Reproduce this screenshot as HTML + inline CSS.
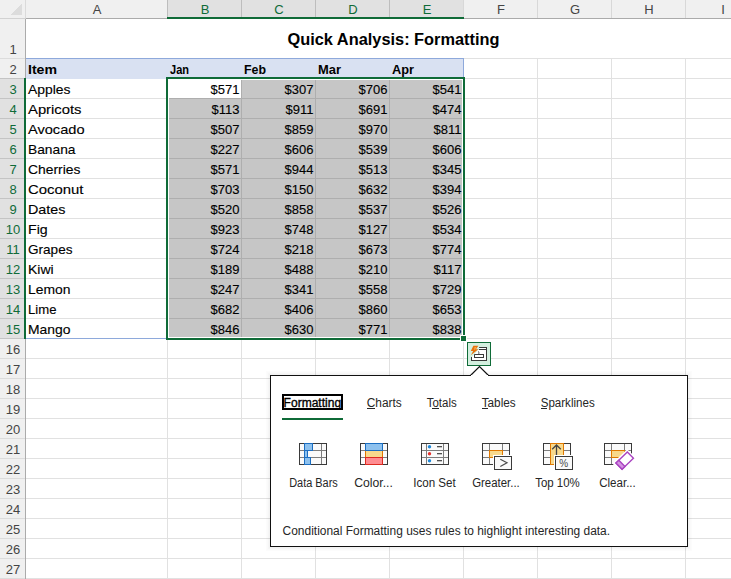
<!DOCTYPE html>
<html><head><meta charset="utf-8"><style>
html,body{margin:0;padding:0;width:731px;height:579px;overflow:hidden;background:#fff}
svg{display:block;font-family:"Liberation Sans",sans-serif}
text.c{stroke:#000;stroke-width:0.12px}
</style></head><body>
<svg width="731" height="579" viewBox="0 0 731 579" shape-rendering="crispEdges">
<rect x="0" y="0" width="731" height="579" fill="#fff"/>
<rect x="26" y="58" width="705" height="1" fill="#e1e1e1"/>
<rect x="26" y="78" width="705" height="1" fill="#e1e1e1"/>
<rect x="26" y="98" width="705" height="1" fill="#e1e1e1"/>
<rect x="26" y="118" width="705" height="1" fill="#e1e1e1"/>
<rect x="26" y="138" width="705" height="1" fill="#e1e1e1"/>
<rect x="26" y="158" width="705" height="1" fill="#e1e1e1"/>
<rect x="26" y="178" width="705" height="1" fill="#e1e1e1"/>
<rect x="26" y="198" width="705" height="1" fill="#e1e1e1"/>
<rect x="26" y="218" width="705" height="1" fill="#e1e1e1"/>
<rect x="26" y="238" width="705" height="1" fill="#e1e1e1"/>
<rect x="26" y="258" width="705" height="1" fill="#e1e1e1"/>
<rect x="26" y="278" width="705" height="1" fill="#e1e1e1"/>
<rect x="26" y="298" width="705" height="1" fill="#e1e1e1"/>
<rect x="26" y="318" width="705" height="1" fill="#e1e1e1"/>
<rect x="26" y="338" width="705" height="1" fill="#e1e1e1"/>
<rect x="26" y="358" width="705" height="1" fill="#e1e1e1"/>
<rect x="26" y="378" width="705" height="1" fill="#e1e1e1"/>
<rect x="26" y="398" width="705" height="1" fill="#e1e1e1"/>
<rect x="26" y="418" width="705" height="1" fill="#e1e1e1"/>
<rect x="26" y="438" width="705" height="1" fill="#e1e1e1"/>
<rect x="26" y="458" width="705" height="1" fill="#e1e1e1"/>
<rect x="26" y="478" width="705" height="1" fill="#e1e1e1"/>
<rect x="26" y="498" width="705" height="1" fill="#e1e1e1"/>
<rect x="26" y="518" width="705" height="1" fill="#e1e1e1"/>
<rect x="26" y="538" width="705" height="1" fill="#e1e1e1"/>
<rect x="26" y="558" width="705" height="1" fill="#e1e1e1"/>
<rect x="26" y="578" width="705" height="1" fill="#e1e1e1"/>
<rect x="167" y="59" width="1" height="520" fill="#e1e1e1"/>
<rect x="241" y="59" width="1" height="520" fill="#e1e1e1"/>
<rect x="315" y="59" width="1" height="520" fill="#e1e1e1"/>
<rect x="389" y="59" width="1" height="520" fill="#e1e1e1"/>
<rect x="463" y="59" width="1" height="520" fill="#e1e1e1"/>
<rect x="537" y="59" width="1" height="520" fill="#e1e1e1"/>
<rect x="611" y="59" width="1" height="520" fill="#e1e1e1"/>
<rect x="685" y="59" width="1" height="520" fill="#e1e1e1"/>
<rect x="26" y="58" width="438" height="21" fill="#d9e1f2"/>
<rect x="26" y="58" width="438" height="1" fill="#8ea9db"/>
<rect x="463" y="58" width="1" height="21" fill="#8ea9db"/>
<rect x="26" y="338" width="140" height="1" fill="#8ea9db"/>
<rect x="168" y="79" width="295" height="259" fill="#c6c6c6"/>
<rect x="241" y="79" width="1" height="259" fill="#aeaeae"/>
<rect x="315" y="79" width="1" height="259" fill="#aeaeae"/>
<rect x="389" y="79" width="1" height="259" fill="#aeaeae"/>
<rect x="168" y="98" width="295" height="1" fill="#aeaeae"/>
<rect x="168" y="118" width="295" height="1" fill="#aeaeae"/>
<rect x="168" y="138" width="295" height="1" fill="#aeaeae"/>
<rect x="168" y="158" width="295" height="1" fill="#aeaeae"/>
<rect x="168" y="178" width="295" height="1" fill="#aeaeae"/>
<rect x="168" y="198" width="295" height="1" fill="#aeaeae"/>
<rect x="168" y="218" width="295" height="1" fill="#aeaeae"/>
<rect x="168" y="238" width="295" height="1" fill="#aeaeae"/>
<rect x="168" y="258" width="295" height="1" fill="#aeaeae"/>
<rect x="168" y="278" width="295" height="1" fill="#aeaeae"/>
<rect x="168" y="298" width="295" height="1" fill="#aeaeae"/>
<rect x="168" y="318" width="295" height="1" fill="#aeaeae"/>
<rect x="168" y="79" width="73" height="19" fill="#fff"/>
<rect x="168" y="79" width="295" height="1" fill="#fff"/>
<rect x="168" y="337" width="295" height="1" fill="#fff"/>
<rect x="168" y="79" width="1" height="259" fill="#fff"/>
<rect x="462" y="79" width="1" height="259" fill="#fff"/>
<rect x="166" y="77" width="299" height="2" fill="#0f6b38"/>
<rect x="166" y="338" width="299" height="2" fill="#0f6b38"/>
<rect x="166" y="77" width="2" height="263" fill="#0f6b38"/>
<rect x="463" y="77" width="2" height="263" fill="#0f6b38"/>
<rect x="460" y="335" width="7" height="7" fill="#fff"/>
<rect x="461" y="336" width="5" height="5" fill="#0f6b38"/>
<rect x="0" y="0" width="731" height="18" fill="#f0f0f0"/>
<rect x="167" y="0" width="297" height="18" fill="#e1e1e1"/>
<rect x="26" y="18" width="705" height="1" fill="#ababab"/>
<rect x="0" y="18" width="26" height="1" fill="#d2d2d2"/>
<rect x="25" y="0" width="1" height="18" fill="#dadada"/>
<rect x="167" y="17" width="297" height="2" fill="#0f6b38"/>
<rect x="167" y="0" width="1" height="17" fill="#bdbdbd"/>
<rect x="241" y="0" width="1" height="17" fill="#bdbdbd"/>
<rect x="315" y="0" width="1" height="17" fill="#bdbdbd"/>
<rect x="389" y="0" width="1" height="17" fill="#bdbdbd"/>
<rect x="463" y="0" width="1" height="17" fill="#d8d8d8"/>
<rect x="537" y="0" width="1" height="18" fill="#d8d8d8"/>
<rect x="611" y="0" width="1" height="18" fill="#d8d8d8"/>
<rect x="685" y="0" width="1" height="18" fill="#d8d8d8"/>
<polygon points="11,14.5 22,14.5 22,3.7" fill="#dcdcdc"/>
<rect x="0" y="19" width="25" height="560" fill="#f0f0f0"/>
<rect x="0" y="79" width="24" height="259" fill="#e1e1e1"/>
<rect x="25" y="19" width="1" height="560" fill="#ababab"/>
<rect x="24" y="78" width="2" height="261" fill="#0f6b38"/>
<rect x="0" y="58" width="25" height="1" fill="#dcdcdc"/>
<rect x="0" y="78" width="24" height="1" fill="#c4c4c4"/>
<rect x="0" y="98" width="24" height="1" fill="#c4c4c4"/>
<rect x="0" y="118" width="24" height="1" fill="#c4c4c4"/>
<rect x="0" y="138" width="24" height="1" fill="#c4c4c4"/>
<rect x="0" y="158" width="24" height="1" fill="#c4c4c4"/>
<rect x="0" y="178" width="24" height="1" fill="#c4c4c4"/>
<rect x="0" y="198" width="24" height="1" fill="#c4c4c4"/>
<rect x="0" y="218" width="24" height="1" fill="#c4c4c4"/>
<rect x="0" y="238" width="24" height="1" fill="#c4c4c4"/>
<rect x="0" y="258" width="24" height="1" fill="#c4c4c4"/>
<rect x="0" y="278" width="24" height="1" fill="#c4c4c4"/>
<rect x="0" y="298" width="24" height="1" fill="#c4c4c4"/>
<rect x="0" y="318" width="24" height="1" fill="#c4c4c4"/>
<rect x="0" y="338" width="24" height="1" fill="#c4c4c4"/>
<rect x="0" y="358" width="25" height="1" fill="#dcdcdc"/>
<rect x="0" y="378" width="25" height="1" fill="#dcdcdc"/>
<rect x="0" y="398" width="25" height="1" fill="#dcdcdc"/>
<rect x="0" y="418" width="25" height="1" fill="#dcdcdc"/>
<rect x="0" y="438" width="25" height="1" fill="#dcdcdc"/>
<rect x="0" y="458" width="25" height="1" fill="#dcdcdc"/>
<rect x="0" y="478" width="25" height="1" fill="#dcdcdc"/>
<rect x="0" y="498" width="25" height="1" fill="#dcdcdc"/>
<rect x="0" y="518" width="25" height="1" fill="#dcdcdc"/>
<rect x="0" y="538" width="25" height="1" fill="#dcdcdc"/>
<rect x="0" y="558" width="25" height="1" fill="#dcdcdc"/>
<rect x="0" y="578" width="25" height="1" fill="#dcdcdc"/>
<text x="97" y="14" font-size="13" fill="#444" text-anchor="middle">A</text>
<text x="205" y="14" font-size="13" fill="#0f6b38" text-anchor="middle">B</text>
<text x="279" y="14" font-size="13" fill="#0f6b38" text-anchor="middle">C</text>
<text x="353" y="14" font-size="13" fill="#0f6b38" text-anchor="middle">D</text>
<text x="427" y="14" font-size="13" fill="#0f6b38" text-anchor="middle">E</text>
<text x="501" y="14" font-size="13" fill="#444" text-anchor="middle">F</text>
<text x="575" y="14" font-size="13" fill="#444" text-anchor="middle">G</text>
<text x="649" y="14" font-size="13" fill="#444" text-anchor="middle">H</text>
<text x="723" y="14" font-size="13" fill="#444" text-anchor="middle">I</text>
<text x="13" y="54" font-size="13" fill="#444" text-anchor="middle">1</text>
<text x="13" y="74" font-size="13" fill="#444" text-anchor="middle">2</text>
<text x="13" y="94" font-size="13" fill="#0f6b38" text-anchor="middle">3</text>
<text x="13" y="114" font-size="13" fill="#0f6b38" text-anchor="middle">4</text>
<text x="13" y="134" font-size="13" fill="#0f6b38" text-anchor="middle">5</text>
<text x="13" y="154" font-size="13" fill="#0f6b38" text-anchor="middle">6</text>
<text x="13" y="174" font-size="13" fill="#0f6b38" text-anchor="middle">7</text>
<text x="13" y="194" font-size="13" fill="#0f6b38" text-anchor="middle">8</text>
<text x="13" y="214" font-size="13" fill="#0f6b38" text-anchor="middle">9</text>
<text x="13" y="234" font-size="13" fill="#0f6b38" text-anchor="middle">10</text>
<text x="13" y="254" font-size="13" fill="#0f6b38" text-anchor="middle">11</text>
<text x="13" y="274" font-size="13" fill="#0f6b38" text-anchor="middle">12</text>
<text x="13" y="294" font-size="13" fill="#0f6b38" text-anchor="middle">13</text>
<text x="13" y="314" font-size="13" fill="#0f6b38" text-anchor="middle">14</text>
<text x="13" y="334" font-size="13" fill="#0f6b38" text-anchor="middle">15</text>
<text x="13" y="354" font-size="13" fill="#444" text-anchor="middle">16</text>
<text x="13" y="374" font-size="13" fill="#444" text-anchor="middle">17</text>
<text x="13" y="394" font-size="13" fill="#444" text-anchor="middle">18</text>
<text x="13" y="414" font-size="13" fill="#444" text-anchor="middle">19</text>
<text x="13" y="434" font-size="13" fill="#444" text-anchor="middle">20</text>
<text x="13" y="454" font-size="13" fill="#444" text-anchor="middle">21</text>
<text x="13" y="474" font-size="13" fill="#444" text-anchor="middle">22</text>
<text x="13" y="494" font-size="13" fill="#444" text-anchor="middle">23</text>
<text x="13" y="514" font-size="13" fill="#444" text-anchor="middle">24</text>
<text x="13" y="534" font-size="13" fill="#444" text-anchor="middle">25</text>
<text x="13" y="554" font-size="13" fill="#444" text-anchor="middle">26</text>
<text x="13" y="574" font-size="13" fill="#444" text-anchor="middle">27</text>
<text x="287.5" y="44.5" font-size="16" fill="#000" font-weight="bold" textLength="212" lengthAdjust="spacingAndGlyphs">Quick Analysis: Formatting</text>
<text x="28" y="74" font-size="13" fill="#000" font-weight="bold" textLength="29" lengthAdjust="spacingAndGlyphs">Item</text>
<text x="170" y="74" font-size="13" fill="#000" font-weight="bold" textLength="19" lengthAdjust="spacingAndGlyphs">Jan</text>
<text x="244" y="74" font-size="13" fill="#000" font-weight="bold" textLength="22" lengthAdjust="spacingAndGlyphs">Feb</text>
<text x="318" y="74" font-size="13" fill="#000" font-weight="bold" textLength="23" lengthAdjust="spacingAndGlyphs">Mar</text>
<text x="392" y="74" font-size="13" fill="#000" font-weight="bold" textLength="22" lengthAdjust="spacingAndGlyphs">Apr</text>
<text x="28" y="94" font-size="13" fill="#000" textLength="42.5" lengthAdjust="spacingAndGlyphs" class="c">Apples</text>
<text x="239.5" y="94" font-size="13" fill="#000" text-anchor="end" class="c">$571</text>
<text x="313.5" y="94" font-size="13" fill="#000" text-anchor="end" class="c">$307</text>
<text x="387.5" y="94" font-size="13" fill="#000" text-anchor="end" class="c">$706</text>
<text x="461.5" y="94" font-size="13" fill="#000" text-anchor="end" class="c">$541</text>
<text x="28" y="114" font-size="13" fill="#000" textLength="53.5" lengthAdjust="spacingAndGlyphs" class="c">Apricots</text>
<text x="239.5" y="114" font-size="13" fill="#000" text-anchor="end" class="c">$113</text>
<text x="313.5" y="114" font-size="13" fill="#000" text-anchor="end" class="c">$911</text>
<text x="387.5" y="114" font-size="13" fill="#000" text-anchor="end" class="c">$691</text>
<text x="461.5" y="114" font-size="13" fill="#000" text-anchor="end" class="c">$474</text>
<text x="28" y="134" font-size="13" fill="#000" textLength="56.5" lengthAdjust="spacingAndGlyphs" class="c">Avocado</text>
<text x="239.5" y="134" font-size="13" fill="#000" text-anchor="end" class="c">$507</text>
<text x="313.5" y="134" font-size="13" fill="#000" text-anchor="end" class="c">$859</text>
<text x="387.5" y="134" font-size="13" fill="#000" text-anchor="end" class="c">$970</text>
<text x="461.5" y="134" font-size="13" fill="#000" text-anchor="end" class="c">$811</text>
<text x="28" y="154" font-size="13" fill="#000" textLength="47.5" lengthAdjust="spacingAndGlyphs" class="c">Banana</text>
<text x="239.5" y="154" font-size="13" fill="#000" text-anchor="end" class="c">$227</text>
<text x="313.5" y="154" font-size="13" fill="#000" text-anchor="end" class="c">$606</text>
<text x="387.5" y="154" font-size="13" fill="#000" text-anchor="end" class="c">$539</text>
<text x="461.5" y="154" font-size="13" fill="#000" text-anchor="end" class="c">$606</text>
<text x="28" y="174" font-size="13" fill="#000" textLength="52.5" lengthAdjust="spacingAndGlyphs" class="c">Cherries</text>
<text x="239.5" y="174" font-size="13" fill="#000" text-anchor="end" class="c">$571</text>
<text x="313.5" y="174" font-size="13" fill="#000" text-anchor="end" class="c">$944</text>
<text x="387.5" y="174" font-size="13" fill="#000" text-anchor="end" class="c">$513</text>
<text x="461.5" y="174" font-size="13" fill="#000" text-anchor="end" class="c">$345</text>
<text x="28" y="194" font-size="13" fill="#000" textLength="55.5" lengthAdjust="spacingAndGlyphs" class="c">Coconut</text>
<text x="239.5" y="194" font-size="13" fill="#000" text-anchor="end" class="c">$703</text>
<text x="313.5" y="194" font-size="13" fill="#000" text-anchor="end" class="c">$150</text>
<text x="387.5" y="194" font-size="13" fill="#000" text-anchor="end" class="c">$632</text>
<text x="461.5" y="194" font-size="13" fill="#000" text-anchor="end" class="c">$394</text>
<text x="28" y="214" font-size="13" fill="#000" textLength="37.5" lengthAdjust="spacingAndGlyphs" class="c">Dates</text>
<text x="239.5" y="214" font-size="13" fill="#000" text-anchor="end" class="c">$520</text>
<text x="313.5" y="214" font-size="13" fill="#000" text-anchor="end" class="c">$858</text>
<text x="387.5" y="214" font-size="13" fill="#000" text-anchor="end" class="c">$537</text>
<text x="461.5" y="214" font-size="13" fill="#000" text-anchor="end" class="c">$526</text>
<text x="28" y="234" font-size="13" fill="#000" textLength="19.7" lengthAdjust="spacingAndGlyphs" class="c">Fig</text>
<text x="239.5" y="234" font-size="13" fill="#000" text-anchor="end" class="c">$923</text>
<text x="313.5" y="234" font-size="13" fill="#000" text-anchor="end" class="c">$748</text>
<text x="387.5" y="234" font-size="13" fill="#000" text-anchor="end" class="c">$127</text>
<text x="461.5" y="234" font-size="13" fill="#000" text-anchor="end" class="c">$534</text>
<text x="28" y="254" font-size="13" fill="#000" textLength="44.5" lengthAdjust="spacingAndGlyphs" class="c">Grapes</text>
<text x="239.5" y="254" font-size="13" fill="#000" text-anchor="end" class="c">$724</text>
<text x="313.5" y="254" font-size="13" fill="#000" text-anchor="end" class="c">$218</text>
<text x="387.5" y="254" font-size="13" fill="#000" text-anchor="end" class="c">$673</text>
<text x="461.5" y="254" font-size="13" fill="#000" text-anchor="end" class="c">$774</text>
<text x="28" y="274" font-size="13" fill="#000" textLength="25.7" lengthAdjust="spacingAndGlyphs" class="c">Kiwi</text>
<text x="239.5" y="274" font-size="13" fill="#000" text-anchor="end" class="c">$189</text>
<text x="313.5" y="274" font-size="13" fill="#000" text-anchor="end" class="c">$488</text>
<text x="387.5" y="274" font-size="13" fill="#000" text-anchor="end" class="c">$210</text>
<text x="461.5" y="274" font-size="13" fill="#000" text-anchor="end" class="c">$117</text>
<text x="28" y="294" font-size="13" fill="#000" textLength="42.5" lengthAdjust="spacingAndGlyphs" class="c">Lemon</text>
<text x="239.5" y="294" font-size="13" fill="#000" text-anchor="end" class="c">$247</text>
<text x="313.5" y="294" font-size="13" fill="#000" text-anchor="end" class="c">$341</text>
<text x="387.5" y="294" font-size="13" fill="#000" text-anchor="end" class="c">$558</text>
<text x="461.5" y="294" font-size="13" fill="#000" text-anchor="end" class="c">$729</text>
<text x="28" y="314" font-size="13" fill="#000" textLength="28.5" lengthAdjust="spacingAndGlyphs" class="c">Lime</text>
<text x="239.5" y="314" font-size="13" fill="#000" text-anchor="end" class="c">$682</text>
<text x="313.5" y="314" font-size="13" fill="#000" text-anchor="end" class="c">$406</text>
<text x="387.5" y="314" font-size="13" fill="#000" text-anchor="end" class="c">$860</text>
<text x="461.5" y="314" font-size="13" fill="#000" text-anchor="end" class="c">$653</text>
<text x="28" y="334" font-size="13" fill="#000" textLength="42.5" lengthAdjust="spacingAndGlyphs" class="c">Mango</text>
<text x="239.5" y="334" font-size="13" fill="#000" text-anchor="end" class="c">$846</text>
<text x="313.5" y="334" font-size="13" fill="#000" text-anchor="end" class="c">$630</text>
<text x="387.5" y="334" font-size="13" fill="#000" text-anchor="end" class="c">$771</text>
<text x="461.5" y="334" font-size="13" fill="#000" text-anchor="end" class="c">$838</text>
<rect x="269" y="374" width="419" height="173" fill="none" stroke="rgba(0,0,0,0.05)" stroke-width="1" transform="translate(0.5,0.5)" shape-rendering="crispEdges"/>
<rect x="268" y="373" width="421" height="175" fill="none" stroke="rgba(0,0,0,0.035)" stroke-width="1" transform="translate(0.5,0.5)" shape-rendering="crispEdges"/>
<rect x="267" y="372" width="423" height="177" fill="none" stroke="rgba(0,0,0,0.02)" stroke-width="1" transform="translate(0.5,0.5)" shape-rendering="crispEdges"/>
<rect x="266" y="371" width="425" height="179" fill="none" stroke="rgba(0,0,0,0.01)" stroke-width="1" transform="translate(0.5,0.5)" shape-rendering="crispEdges"/>
<rect x="270" y="375" width="418" height="172" fill="#111"/>
<rect x="271" y="376" width="416" height="170" fill="#fff"/>
<polygon points="470.5,375.5 479.5,366.5 488.5,375.5" fill="#fff" stroke="#111" stroke-width="1.2" shape-rendering="geometricPrecision"/>
<rect x="471" y="375" width="17" height="2" fill="#fff"/>
<rect x="282" y="394" width="61" height="16" fill="#000"/>
<rect x="284" y="396" width="57" height="12" fill="#fff"/>
<svg x="284" y="396" width="57" height="12" overflow="hidden">
<text x="-0.4" y="10.5" font-size="12" fill="#000" textLength="57.5" lengthAdjust="spacingAndGlyphs" stroke="#000" stroke-width="0.35">Formatting</text>
</svg>
<rect x="282" y="418" width="61" height="2" fill="#0f6b38"/>
<text x="366.7" y="406.6" font-size="12" fill="#262626" textLength="35" lengthAdjust="spacingAndGlyphs">Charts</text>
<rect x="367" y="408" width="8" height="1" fill="#262626"/>
<text x="426.7" y="406.6" font-size="12" fill="#262626" textLength="30" lengthAdjust="spacingAndGlyphs">Totals</text>
<rect x="432" y="408" width="7" height="1" fill="#262626"/>
<text x="481.7" y="406.6" font-size="12" fill="#262626" textLength="34" lengthAdjust="spacingAndGlyphs">Tables</text>
<rect x="482" y="408" width="6" height="1" fill="#262626"/>
<text x="540.7" y="406.6" font-size="12" fill="#262626" textLength="54" lengthAdjust="spacingAndGlyphs">Sparklines</text>
<rect x="541" y="408" width="6" height="1" fill="#262626"/>
<rect x="299" y="443" width="28" height="22" fill="#3a3a3a"/>
<rect x="300" y="444" width="26" height="20" fill="#fafafa"/>
<rect x="300" y="450" width="26" height="1" fill="#7d7d7d"/>
<rect x="300" y="457" width="26" height="1" fill="#7d7d7d"/>
<rect x="304" y="444" width="1" height="20" fill="#7d7d7d"/>
<rect x="321" y="444" width="1" height="20" fill="#7d7d7d"/>
<rect x="304" y="443" width="9" height="8" fill="#1b6ec2"/>
<rect x="305" y="444" width="7" height="6" fill="#8dc1ee"/>
<rect x="304" y="450" width="4" height="8" fill="#1b6ec2"/>
<rect x="305" y="451" width="2" height="6" fill="#8dc1ee"/>
<rect x="304" y="457" width="7" height="8" fill="#1b6ec2"/>
<rect x="305" y="458" width="5" height="6" fill="#8dc1ee"/>
<rect x="360" y="443" width="28" height="22" fill="#3a3a3a"/>
<rect x="361" y="444" width="26" height="20" fill="#fafafa"/>
<rect x="361" y="450" width="26" height="1" fill="#7d7d7d"/>
<rect x="361" y="457" width="26" height="1" fill="#7d7d7d"/>
<rect x="365" y="444" width="1" height="20" fill="#7d7d7d"/>
<rect x="382" y="444" width="1" height="20" fill="#7d7d7d"/>
<rect x="365" y="450" width="18" height="8" fill="#e07800"/>
<rect x="366" y="451" width="16" height="6" fill="#f8d98c"/>
<rect x="365" y="443" width="18" height="8" fill="#1b6ec2"/>
<rect x="366" y="444" width="16" height="6" fill="#8dc1ee"/>
<rect x="365" y="457" width="18" height="8" fill="#dc2a20"/>
<rect x="366" y="458" width="16" height="6" fill="#ff8c91"/>
<rect x="366" y="451" width="16" height="6" fill="#f8d98c"/>
<rect x="421" y="443" width="28" height="22" fill="#3a3a3a"/>
<rect x="422" y="444" width="26" height="20" fill="#fafafa"/>
<rect x="422" y="450" width="26" height="1" fill="#7d7d7d"/>
<rect x="422" y="457" width="26" height="1" fill="#7d7d7d"/>
<rect x="426" y="444" width="1" height="20" fill="#7d7d7d"/>
<rect x="443" y="444" width="1" height="20" fill="#7d7d7d"/>
<circle cx="429.5" cy="446.8" r="1.7" fill="#1e88d8" shape-rendering="geometricPrecision"/>
<rect x="437" y="446" width="5" height="1" fill="#505050"/>
<rect x="437" y="447" width="5" height="1" fill="#c4c4c4"/>
<circle cx="429.5" cy="453.8" r="1.7" fill="#e5322d" shape-rendering="geometricPrecision"/>
<rect x="437" y="453" width="5" height="1" fill="#505050"/>
<rect x="437" y="454" width="5" height="1" fill="#c4c4c4"/>
<circle cx="429.5" cy="460.8" r="1.7" fill="#1e88d8" shape-rendering="geometricPrecision"/>
<rect x="437" y="460" width="5" height="1" fill="#505050"/>
<rect x="437" y="461" width="5" height="1" fill="#c4c4c4"/>
<rect x="482" y="443" width="28" height="22" fill="#3a3a3a"/>
<rect x="483" y="444" width="26" height="20" fill="#fafafa"/>
<rect x="483" y="450" width="26" height="1" fill="#7d7d7d"/>
<rect x="483" y="457" width="26" height="1" fill="#7d7d7d"/>
<rect x="489" y="444" width="1" height="20" fill="#7d7d7d"/>
<rect x="502" y="444" width="1" height="20" fill="#7d7d7d"/>
<rect x="489" y="450" width="14" height="8" fill="#e07800"/>
<rect x="490" y="451" width="12" height="6" fill="#f8d98c"/>
<rect x="493" y="455" width="21" height="17" fill="#fff"/>
<rect x="494" y="456" width="18" height="14" fill="#3a3a3a"/>
<rect x="495" y="457" width="16" height="12" fill="#fafafa"/>
<polyline points="500.3,459.3 507,462.8 500.3,466.5" fill="none" stroke="#4a4a4a" stroke-width="1.2" shape-rendering="geometricPrecision"/>
<rect x="543" y="443" width="28" height="22" fill="#3a3a3a"/>
<rect x="544" y="444" width="26" height="20" fill="#fafafa"/>
<rect x="544" y="450" width="26" height="1" fill="#7d7d7d"/>
<rect x="544" y="457" width="26" height="1" fill="#7d7d7d"/>
<rect x="550" y="444" width="1" height="20" fill="#7d7d7d"/>
<rect x="563" y="444" width="1" height="20" fill="#7d7d7d"/>
<rect x="550" y="443" width="14" height="22" fill="#e07800"/>
<rect x="551" y="444" width="12" height="20" fill="#f8d98c"/>
<path d="M556.5,445 V455 M552.2,449.3 L556.5,445 L560.8,449.3" fill="none" stroke="#444" stroke-width="1.3" shape-rendering="geometricPrecision"/>
<rect x="554" y="455" width="21" height="17" fill="#fff"/>
<rect x="555" y="456" width="18" height="14" fill="#3a3a3a"/>
<rect x="556" y="457" width="16" height="12" fill="#fafafa"/>
<text x="563.6" y="467.2" font-size="10" fill="#4a4a4a" text-anchor="middle" shape-rendering="geometricPrecision">%</text>
<rect x="604" y="443" width="28" height="22" fill="#3a3a3a"/>
<rect x="605" y="444" width="26" height="20" fill="#fafafa"/>
<rect x="605" y="450" width="26" height="1" fill="#7d7d7d"/>
<rect x="605" y="457" width="26" height="1" fill="#7d7d7d"/>
<rect x="611" y="444" width="1" height="20" fill="#7d7d7d"/>
<rect x="624" y="444" width="1" height="20" fill="#7d7d7d"/>
<rect x="611" y="450" width="14" height="8" fill="#e07800"/>
<rect x="612" y="451" width="12" height="6" fill="#f8d98c"/>
<polygon points="613.3,462.5 627.1,449.2 636,457.5 640,462 640,475 613.3,475" fill="#fff" shape-rendering="geometricPrecision"/>
<g transform="translate(624.7,460.6) rotate(-44)" shape-rendering="geometricPrecision"><rect x="-7.9" y="-4.4" width="15.8" height="8.8" fill="#fff" stroke="#a943c0" stroke-width="1.4"/><rect x="-7.9" y="-4.4" width="4" height="8.8" fill="#d593e3" stroke="#a943c0" stroke-width="1.4"/></g>
<text x="289.2" y="487" font-size="12" fill="#262626" textLength="48.6" lengthAdjust="spacingAndGlyphs">Data Bars</text>
<text x="354.2" y="487" font-size="12" fill="#262626" textLength="38.6" lengthAdjust="spacingAndGlyphs">Color...</text>
<text x="413.2" y="487" font-size="12" fill="#262626" textLength="42.6" lengthAdjust="spacingAndGlyphs">Icon Set</text>
<text x="472.2" y="487" font-size="12" fill="#262626" textLength="47.6" lengthAdjust="spacingAndGlyphs">Greater...</text>
<text x="535.2" y="487" font-size="12" fill="#262626" textLength="44.6" lengthAdjust="spacingAndGlyphs">Top 10%</text>
<text x="599.2" y="487" font-size="12" fill="#262626" textLength="36.6" lengthAdjust="spacingAndGlyphs">Clear...</text>
<text x="282.6" y="534.6" font-size="12" fill="#262626" textLength="327.5" lengthAdjust="spacingAndGlyphs">Conditional Formatting uses rules to highlight interesting data.</text>
<rect x="467" y="342" width="24" height="24" fill="#0f6b38"/>
<rect x="468" y="343" width="22" height="22" fill="#d4efdf"/>
<rect x="472" y="350" width="14" height="10" fill="#fff"/>
<rect x="479" y="348" width="7" height="1" fill="#fff"/>
<rect x="479" y="347" width="8" height="1" fill="#3a3a3a"/>
<rect x="479" y="349" width="8" height="1" fill="#3a3a3a"/>
<rect x="486" y="347" width="1" height="14" fill="#3a3a3a"/>
<rect x="471" y="360" width="16" height="1" fill="#3a3a3a"/>
<rect x="471" y="356" width="1" height="5" fill="#3a3a3a"/>
<rect x="474" y="354" width="10" height="4" fill="#3a3a3a"/>
<rect x="475" y="355" width="8" height="2" fill="#fff"/>
<rect x="478" y="351" width="1" height="3" fill="#9a9a9a"/>
<rect x="479" y="352" width="1" height="2" fill="#c8c8c8"/>
<polygon points="468,345 479.5,345 479.5,346.5 478,350 472,357 468,357" fill="#d4efdf" shape-rendering="geometricPrecision"/>
<polygon points="473.4,345.8 478.3,345.8 476,349.2 478.4,349.2 470.8,355.2 473.2,351 470.8,351" fill="#e8720c" shape-rendering="geometricPrecision"/>
<polygon points="474.5,347 476.5,347 475.2,349.8 474,349.8" fill="#f4a64a" shape-rendering="geometricPrecision"/>
</svg>
</body></html>
